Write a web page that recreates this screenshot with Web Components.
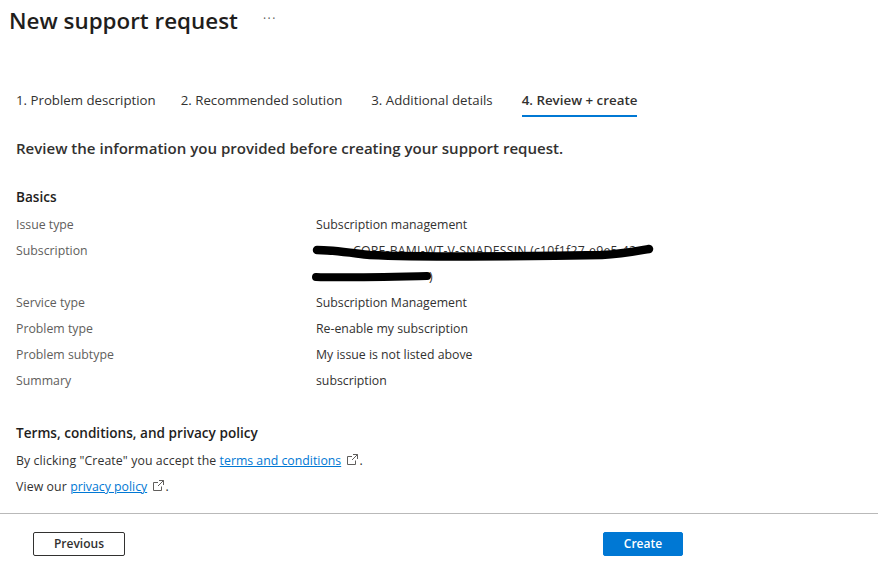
<!DOCTYPE html>
<html lang="en">
<head>
<meta charset="UTF-8">
<title>New support request</title>
<style>
  html, body { margin: 0; height: 100%; background: #fff; }
  body { font: 12.3px/20px "Open Sans", "Noto Sans", sans-serif; color: #323130; }
</style>
</head>
<body>
<template id="tpl-page">
  <style>
    :host { display: flex; flex-direction: column; width: 878px; height: 566px; overflow: hidden; }
    main { flex: 1; padding: 0 16px; }
  </style>
  <slot name="head"></slot>
  <main><slot></slot></main>
  <slot name="foot"></slot>
</template>

<template id="tpl-title">
  <style>
    :host { display: flex; align-items: center; height: 42px; margin-left: 9px; color: #1f1e1d; }
    h1 { margin: 0; font-size: 22.4px; line-height: 42px; font-weight: 600; }
    span { margin-left: 25px; color: #605e5c; font-size: 12px; letter-spacing: 1.5px; position: relative; top: -2px; }
  </style>
  <h1><slot></slot></h1><span>···</span>
</template>

<template id="tpl-tabs">
  <style>
    :host { display: flex; gap: 29px; margin: 43px 0 0; height: 32px; }
    ::slotted(:first-child) { margin-right: -4px; }
  </style>
  <slot></slot>
</template>

<template id="tpl-tab">
  <style>
    :host { display: block; height: 32px; box-sizing: border-box; padding-top: 5px; white-space: nowrap; font-size: 13.25px; }
    :host([active]) { font-weight: 600; border-bottom: 2px solid #0078d4; font-size: 13.35px; }
  </style>
  <slot></slot>
</template>

<template id="tpl-section">
  <style>
    :host { display: block; }
    h3 { margin: 0; font-size: 13.6px; font-weight: 600; line-height: 20px; color: #1f1e1d; }
  </style>
  <h3><slot name="heading"></slot></h3>
  <slot></slot>
</template>

<template id="tpl-row">
  <style>
    :host { display: grid; grid-template-columns: 300px 340px; padding: 3px 0; position: relative; }
    .k { color: #605e5c; }
    .v { line-height: 26px; margin: -3px 0; }
  </style>
  <div class="k"><slot name="k"></slot></div>
  <div class="v"><slot></slot></div>
</template>

<template id="tpl-ext">
  <style>
    :host { display: inline; }
    a { color: #0078d4; text-decoration: underline; }
    svg { width: 13px; height: 13px; vertical-align: -1px; margin: 0 -3px 0 5px; fill: none; stroke: #605e5c; stroke-width: 1; }
  </style>
  <a href="#"><slot></slot></a><svg viewBox="0 0 13 13"><path d="M9.5 7.5v4h-8v-8h4.5M7 1.5h4.5V6M11.5 1.5 6 7"/></svg>
</template>

<template id="tpl-footer">
  <style>
    :host { display: flex; height: 34px; border-top: 1px solid #b9b9b9; box-sizing: content-box; padding: 18px 0 0 33px; }
    div { display: flex; gap: 478px; height: 24px; }
  </style>
  <div><slot></slot></div>
</template>

<template id="tpl-btn">
  <style>
    :host { display: block; }
    button {
      display: block; font: 600 12px/20px "Open Sans", "Noto Sans", sans-serif; height: 24px; padding: 0;
      border-radius: 2px; border: 1px solid #323130; background: #fff; color: #323130; width: 92px;
    }
    :host([primary]) button { background: #0078d4; border-color: #0078d4; color: #fff; width: 80px; }
  </style>
  <button type="button"><slot></slot></button>
</template>

<template id="tpl-scribble">
  <style>
    :host { position: absolute; left: -4px; top: 0; width: 400px; height: 60px; pointer-events: none; }
    svg { display: block; width: 100%; height: 100%; fill: none; stroke: #000; stroke-linecap: round; }
  </style>
  <svg viewBox="0 0 400 60">
    <path stroke-width="8.5" d="M5 12C20 12 40 15 58 17C100 19 200 19 290 17C310 16 325 13 337 11"/>
    <path stroke-width="8" d="M4 39C30 40 70 39 115 38"/>
  </svg>
</template>

<script>
  // every element just clones its template into an open shadow root
  const parts = {
    'support-page': 'tpl-page',
    'support-title': 'tpl-title',
    'wizard-tabs': 'tpl-tabs',
    'wizard-tab': 'tpl-tab',
    'review-section': 'tpl-section',
    'review-row': 'tpl-row',
    'ext-link': 'tpl-ext',
    'wizard-footer': 'tpl-footer',
    'action-btn': 'tpl-btn',
    'ink-scribble': 'tpl-scribble'
  };
  for (const [name, id] of Object.entries(parts)) {
    customElements.define(name, class extends HTMLElement {
      constructor() {
        super();
        this.attachShadow({ mode: 'open' })
          .appendChild(document.getElementById(id).content.cloneNode(true));
      }
    });
  }
</script>

<support-page>
  <support-title slot="head">New support request</support-title>

  <wizard-tabs>
    <wizard-tab>1. Problem description</wizard-tab>
    <wizard-tab>2. Recommended solution</wizard-tab>
    <wizard-tab>3. Additional details</wizard-tab>
    <wizard-tab active>4. Review + create</wizard-tab>
  </wizard-tabs>

  <div style="font-size:15.05px;font-weight:600;line-height:22px;margin-top:20px;">Review the information you provided before creating your support request.</div>

  <review-section style="margin-top:28px;">
    <span slot="heading">Basics</span>
    <div style="height:5px"></div>
    <review-row><span slot="k">Issue type</span>Subscription management</review-row>
    <review-row><span slot="k">Subscription</span>
      <span style="position:relative;display:block;">
        <span style="display:block;padding-left:37px;letter-spacing:.2px;">CORE-BAMI-WT-V-SNADESSIN (c10f1f27-e9e5-42</span>
        <span style="display:block;padding-left:113px;">)</span>
        <ink-scribble></ink-scribble>
      </span>
    </review-row>
    <review-row><span slot="k">Service type</span>Subscription Management</review-row>
    <review-row><span slot="k">Problem type</span>Re-enable my subscription</review-row>
    <review-row><span slot="k">Problem subtype</span>My issue is not listed above</review-row>
    <review-row><span slot="k">Summary</span>subscription</review-row>
  </review-section>

  <review-section style="margin-top:29px;">
    <span slot="heading">Terms, conditions, and privacy policy</span>
    <div style="margin-top:5px;line-height:26px;"><span style="letter-spacing:.1px;">By clicking "Create" you accept the </span><ext-link>terms and conditions</ext-link>.</div>
    <div style="line-height:26px;"><span style="letter-spacing:.1px;">View our </span><ext-link>privacy policy</ext-link>.</div>
  </review-section>

  <wizard-footer slot="foot">
    <action-btn>Previous</action-btn>
    <action-btn primary>Create</action-btn>
  </wizard-footer>
</support-page>
</body>
</html>
